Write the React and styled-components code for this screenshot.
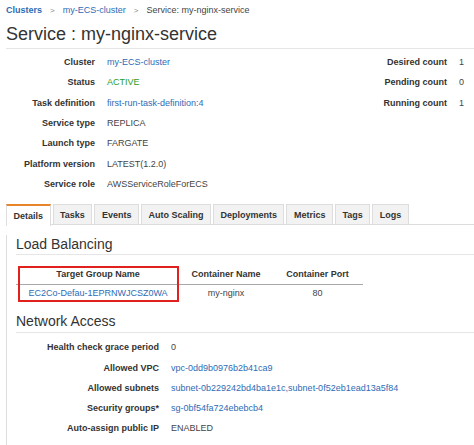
import React from "react";
import styled, { createGlobalStyle } from "styled-components";

const Global = createGlobalStyle`
  html, body { margin: 0; padding: 0; background: #fff; }
  body { font-family: "Liberation Sans", Arial, sans-serif; color: #333; overflow: hidden; }
  * { box-sizing: border-box; }
`;

const Page = styled.div`
  width: 474px;
  height: 445px;
  padding-left: 6px;
  overflow: hidden;
`;

const Breadcrumb = styled.div`
  display: flex;
  align-items: center;
  height: 20px;
  font-size: 9px;
  color: #444;
`;

const Crumb = styled.span`
  color: #2e6bb5;
  font-weight: ${(p) => (p.$bold ? 700 : 400)};
`;

const Sep = styled.span`
  color: #888;
  margin: 0 8px;
  font-size: 8px;
`;

const Title = styled.h1`
  margin: 3px 0 0;
  font-size: 18px;
  font-weight: 400;
  line-height: 22px;
  color: #333;
  padding-bottom: 3px;
  border-bottom: 1px solid #e6e6e6;
`;

const Summary = styled.div`
  display: flex;
  justify-content: space-between;
  margin-top: 3px;
`;

const InfoGrid = styled.div`
  display: grid;
  grid-template-columns: ${(p) => p.$cols};
  column-gap: 12px;
  grid-auto-rows: 20.3px;
  align-items: center;
  font-size: 9px;
  margin-right: ${(p) => p.$mr || "0"};
`;

const Label = styled.div`
  text-align: right;
  font-weight: 700;
  color: #333;
  white-space: nowrap;
`;

const Value = styled.div`
  white-space: nowrap;
  color: ${(p) => (p.$tone === "link" ? "#2e6bb5" : p.$tone === "ok" ? "#2a9d2a" : "#444")};
`;

const TabStrip = styled.div`
  display: flex;
  margin-top: 10px;
  height: 21px;
  border-bottom: 1px solid #ddd;
  position: relative;
  z-index: 1;
`;

const Tab = styled.div`
  display: flex;
  align-items: center;
  height: ${(p) => (p.$active ? "22px" : "21px")};
  padding: 0 6.5px;
  margin-right: 2px;
  font-size: 9px;
  font-weight: 700;
  color: #333;
  background: ${(p) => (p.$active ? "#fff" : "#f2f2f2")};
  border: 1px solid #ddd;
  border-bottom: ${(p) => (p.$active ? "none" : "1px solid #ddd")};
  border-top: ${(p) => (p.$active ? "2px solid #e8852a" : "1px solid #ddd")};
`;

const Panel = styled.div`
  border-left: 1px solid #ddd;
  padding-left: 9px;
  height: 230px;
`;

const SectionTitle = styled.h2`
  margin: ${(p) => p.$mt} 0 0;
  font-size: 14px;
  font-weight: 400;
  line-height: 18px;
  color: #333;
  padding-bottom: ${(p) => p.$pb || "1px"};
  border-bottom: 1px solid #e6e6e6;
`;

const TableWrap = styled.div`
  position: relative;
  margin-top: 10px;
  width: 347px;
`;

const Table = styled.table`
  border-collapse: collapse;
  width: 347px;
  table-layout: fixed;
  font-size: 9px;
`;

const Th = styled.th`
  height: 19px;
  padding: 0;
  font-weight: 700;
  text-align: center;
  color: #333;
  border-bottom: 1px solid #a8a8a8;
  width: ${(p) => p.$w};
`;

const Td = styled.td`
  height: 18px;
  padding: 0;
  text-align: center;
  color: ${(p) => (p.$link ? "#2e6bb5" : "#444")};
`;

const Highlight = styled.div`
  position: absolute;
  left: 2px;
  top: 1px;
  width: 161px;
  height: 36px;
  border: 2px solid #e0211d;
  pointer-events: none;
`;

const NetGrid = styled(InfoGrid)`
  margin-top: 4px;
`;

const topLeft = [
  ["Cluster", "my-ECS-cluster", "link"],
  ["Status", "ACTIVE", "ok"],
  ["Task definition", "first-run-task-definition:4", "link"],
  ["Service type", "REPLICA"],
  ["Launch type", "FARGATE"],
  ["Platform version", "LATEST(1.2.0)"],
  ["Service role", "AWSServiceRoleForECS"],
];

const topRight = [
  ["Desired count", "1"],
  ["Pending count", "0"],
  ["Running count", "1"],
];

const tabs = ["Details", "Tasks", "Events", "Auto Scaling", "Deployments", "Metrics", "Tags", "Logs"];

const network = [
  ["Health check grace period", "0"],
  ["Allowed VPC", "vpc-0dd9b0976b2b41ca9", "link"],
  ["Allowed subnets", "subnet-0b229242bd4ba1e1c,subnet-0f52eb1ead13a5f84", "link"],
  ["Security groups*", "sg-0bf54fa724ebebcb4", "link"],
  ["Auto-assign public IP", "ENABLED"],
];

const Rows = ({ rows }) =>
  rows.map(([l, v, t]) => (
    <React.Fragment key={l}>
      <Label>{l}</Label>
      <Value $tone={t}>{v}</Value>
    </React.Fragment>
  ));

export default function App() {
  return (
    <>
      <Global />
      <Page>
        <Breadcrumb>
          <Crumb $bold>Clusters</Crumb>
          <Sep>&gt;</Sep>
          <Crumb>my-ECS-cluster</Crumb>
          <Sep>&gt;</Sep>
          <span>Service: my-nginx-service</span>
        </Breadcrumb>
        <Title>Service : my-nginx-service</Title>
        <Summary>
          <InfoGrid $cols="89px auto">
            <Rows rows={topLeft} />
          </InfoGrid>
          <InfoGrid $cols="auto 14px" $mr="1px">
            <Rows rows={topRight} />
          </InfoGrid>
        </Summary>
        <TabStrip>
          {tabs.map((t, i) => (
            <Tab key={t} $active={i === 0}>
              {t}
            </Tab>
          ))}
        </TabStrip>
        <Panel>
          <SectionTitle $mt="10px">Load Balancing</SectionTitle>
          <TableWrap>
            <Table>
              <thead>
                <tr>
                  <Th $w="164px">Target Group Name</Th>
                  <Th $w="92px">Container Name</Th>
                  <Th $w="91px">Container Port</Th>
                </tr>
              </thead>
              <tbody>
                <tr>
                  <Td $link>EC2Co-Defau-1EPRNWJCSZ0WA</Td>
                  <Td>my-nginx</Td>
                  <Td>80</Td>
                </tr>
              </tbody>
            </Table>
            <Highlight />
          </TableWrap>
          <SectionTitle $mt="10px" $pb="2px">Network Access</SectionTitle>
          <NetGrid $cols="143px auto">
            <Rows rows={network} />
          </NetGrid>
        </Panel>
      </Page>
    </>
  );
}
